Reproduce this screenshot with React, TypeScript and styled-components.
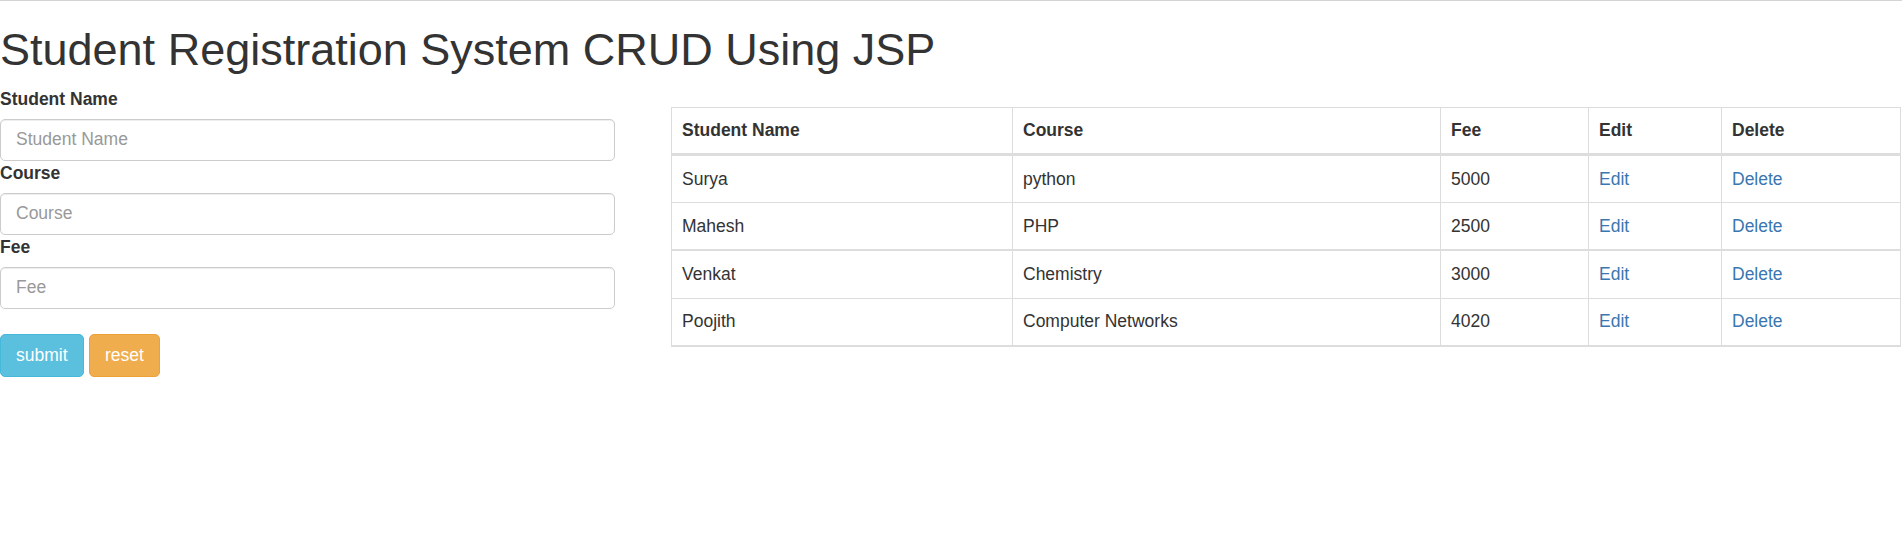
import { useState } from 'react';
import styled, { createGlobalStyle } from 'styled-components';

const GlobalStyle = createGlobalStyle`
  html, body {
    margin: 0;
    padding: 0;
    background: #fff;
  }
  body {
    font-family: "Liberation Sans", Arial, Helvetica, sans-serif;
    font-size: 17.5px;
    line-height: 25px;
    color: #333;
  }
  * {
    box-sizing: border-box;
  }
`;

const Page = styled.div`
  border-top: 1px solid #d4d4d4;
  padding-right: 2px;
`;

const Title = styled.h1`
  margin: 24px 0 12.5px;
  font-size: 45px;
  font-weight: 500;
  line-height: 49.5px;
  color: #333;
`;

const Layout = styled.div`
  display: flex;
  align-items: flex-start;
  gap: 56px;
`;

const Form = styled.form`
  width: 615px;
  flex: none;
`;

const Label = styled.label`
  display: block;
  font-weight: bold;
  margin-bottom: 6.5px;
`;

const Input = styled.input`
  display: block;
  width: 100%;
  height: 42.5px;
  padding: 7.5px 15px;
  font: inherit;
  color: #555;
  border: 1px solid #ccc;
  border-radius: 5px;
  box-shadow: inset 0 1px 1px rgba(0, 0, 0, 0.075);
  background: #fff;

  &::placeholder {
    color: #999;
  }
`;

const Actions = styled.div`
  display: flex;
  gap: 5.5px;
  margin-top: 25px;
`;

const Button = styled.button<{ $variant: 'info' | 'warning' }>`
  height: 42.5px;
  padding: 7.5px 15px;
  font: inherit;
  color: #fff;
  border-radius: 5px;
  cursor: pointer;
  background: ${({ $variant }) => ($variant === 'info' ? '#5bc0de' : '#f0ad4e')};
  border: 1px solid ${({ $variant }) => ($variant === 'info' ? '#46b8da' : '#eea236')};
`;

const TableWrap = styled.div`
  flex: 1;
  margin-top: 20px;
`;

const Table = styled.table`
  width: 100%;
  table-layout: fixed;
  border-collapse: collapse;
  border: 1px solid #ddd;
`;

const Th = styled.th`
  text-align: left;
  font-weight: bold;
  padding: 10px;
  line-height: 25px;
  border: 1px solid #ddd;
  border-bottom: 3px solid #ddd;
`;

const Td = styled.td`
  padding: 10.6px 10px;
  line-height: 25px;
  border: 1px solid #ddd;
`;

const Row = styled.tr<{ $thick?: boolean }>`
  ${({ $thick }) => ($thick ? 'border-bottom: 2px solid #ddd;' : '')}
`;

const Link = styled.a`
  color: #3a77b0;
  text-decoration: none;
`;

const students = [
  { name: 'Surya', course: 'python', fee: '5000' },
  { name: 'Mahesh', course: 'PHP', fee: '2500' },
  { name: 'Venkat', course: 'Chemistry', fee: '3000' },
  { name: 'Poojith', course: 'Computer Networks', fee: '4020' },
];

const widths = [341, 428, 148, 133, 179];

function App() {
  const [name, setName] = useState('');
  const [course, setCourse] = useState('');
  const [fee, setFee] = useState('');

  return (
    <Page>
      <GlobalStyle />
      <Title>Student Registration System CRUD Using JSP</Title>
      <Layout>
        <Form onSubmit={(e) => e.preventDefault()}>
          <Label>Student Name</Label>
          <Input
            placeholder="Student Name"
            value={name}
            onChange={(e) => setName(e.target.value)}
          />
          <Label>Course</Label>
          <Input
            placeholder="Course"
            value={course}
            onChange={(e) => setCourse(e.target.value)}
          />
          <Label>Fee</Label>
          <Input
            placeholder="Fee"
            value={fee}
            onChange={(e) => setFee(e.target.value)}
          />
          <Actions>
            <Button type="submit" $variant="info">
              submit
            </Button>
            <Button
              type="reset"
              $variant="warning"
              onClick={() => {
                setName('');
                setCourse('');
                setFee('');
              }}
            >
              reset
            </Button>
          </Actions>
        </Form>
        <TableWrap>
          <Table>
            <colgroup>
              {widths.map((w) => (
                <col key={w} style={{ width: w }} />
              ))}
            </colgroup>
            <thead>
              <tr>
                <Th>Student Name</Th>
                <Th>Course</Th>
                <Th>Fee</Th>
                <Th>Edit</Th>
                <Th>Delete</Th>
              </tr>
            </thead>
            <tbody>
              {students.map((s, i) => (
                <Row key={s.name} $thick={i === 1 || i === students.length - 1}>
                  <Td>{s.name}</Td>
                  <Td>{s.course}</Td>
                  <Td>{s.fee}</Td>
                  <Td>
                    <Link href="#">Edit</Link>
                  </Td>
                  <Td>
                    <Link href="#">Delete</Link>
                  </Td>
                </Row>
              ))}
            </tbody>
          </Table>
        </TableWrap>
      </Layout>
    </Page>
  );
}

export default App;
